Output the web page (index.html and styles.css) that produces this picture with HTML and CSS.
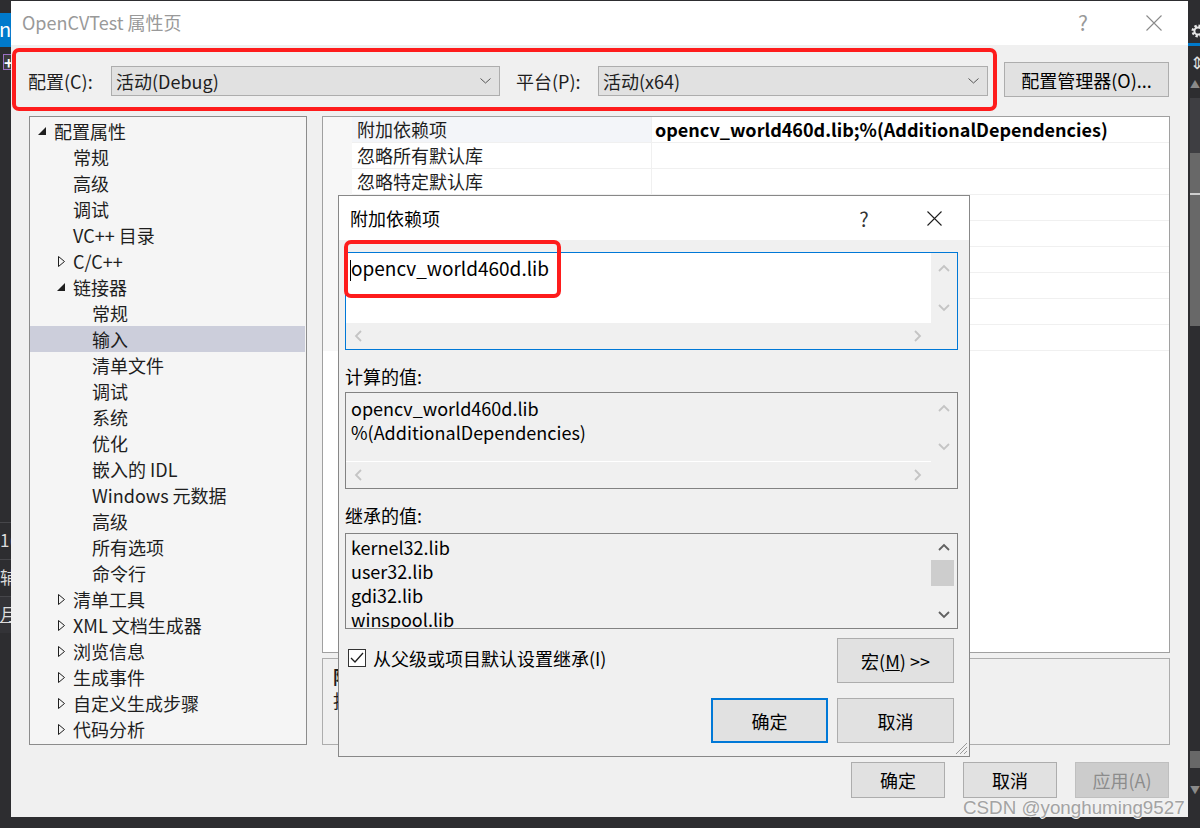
FILE: index.html
```html
<!DOCTYPE html>
<html lang="zh-CN">
<head>
  <meta charset="UTF-8">
  <meta name="viewport" content="width=device-width, initial-scale=1.0">
  <title>OpenCVTest 属性页</title>
  <link rel="stylesheet" href="styles.css">
</head>
<body>
  <div class="desk">
    <!-- strip of the IDE behind, left side -->
    <div class="ide-left">
      <div class="ide-tab">n</div>
      <div class="ide-icon">+</div>
      <div class="ide-space"></div>
      <div class="ide-line">1(</div>
      <div class="ide-line">辅</div>
      <div class="ide-line ide-under">月</div>
    </div>

    <div class="prop-window">
      <div class="titlebar">
        <span class="title">OpenCVTest 属性页</span>
        <span class="tb-help">?</span>
        <span class="tb-close">
          <svg width="16" height="16" viewBox="0 0 16 16"><path d="M0.5 0.5L15.5 15.5M15.5 0.5L0.5 15.5" stroke="#8a8a8a" stroke-width="1.1"/></svg>
        </span>
      </div>

      <div class="win-body">
        <div class="config-row">
          <span class="cfg-label first">配置(C):</span>
          <div class="combo combo-config">
            <span>活动(Debug)</span>
            <svg width="11" height="6" viewBox="0 0 11 6"><polyline points="0.5,0.5 5.5,5 10.5,0.5" fill="none" stroke="#555" stroke-width="1"/></svg>
          </div>
          <span class="cfg-label second">平台(P):</span>
          <div class="combo combo-platform">
            <span>活动(x64)</span>
            <svg width="11" height="6" viewBox="0 0 11 6"><polyline points="0.5,0.5 5.5,5 10.5,0.5" fill="none" stroke="#555" stroke-width="1"/></svg>
          </div>
          <button class="btn btn-manager">配置管理器(O)...</button>
        </div>

        <div class="content">
          <div class="tree">
            <div class="tree-item lv0"><span class="twisty"><svg width="9" height="8" viewBox="0 0 9 8"><polygon points="9,0 9,8 1,8" fill="#1e1e1e"/></svg></span>配置属性</div>
            <div class="tree-item lv1"><span class="twisty"></span>常规</div>
            <div class="tree-item lv1"><span class="twisty"></span>高级</div>
            <div class="tree-item lv1"><span class="twisty"></span>调试</div>
            <div class="tree-item lv1"><span class="twisty"></span>VC++ 目录</div>
            <div class="tree-item lv1"><span class="twisty closed"><svg width="8" height="11" viewBox="0 0 8 11"><polygon points="0.5,0.5 6.5,5.5 0.5,10.5" fill="none" stroke="#1e1e1e" stroke-width="1"/></svg></span>C/C++</div>
            <div class="tree-item lv1"><span class="twisty"><svg width="9" height="8" viewBox="0 0 9 8"><polygon points="9,0 9,8 1,8" fill="#1e1e1e"/></svg></span>链接器</div>
            <div class="tree-item lv2">常规</div>
            <div class="tree-item lv2 selected">输入</div>
            <div class="tree-item lv2">清单文件</div>
            <div class="tree-item lv2">调试</div>
            <div class="tree-item lv2">系统</div>
            <div class="tree-item lv2">优化</div>
            <div class="tree-item lv2">嵌入的 IDL</div>
            <div class="tree-item lv2">Windows 元数据</div>
            <div class="tree-item lv2">高级</div>
            <div class="tree-item lv2">所有选项</div>
            <div class="tree-item lv2">命令行</div>
            <div class="tree-item lv1"><span class="twisty closed"><svg width="8" height="11" viewBox="0 0 8 11"><polygon points="0.5,0.5 6.5,5.5 0.5,10.5" fill="none" stroke="#1e1e1e" stroke-width="1"/></svg></span>清单工具</div>
            <div class="tree-item lv1"><span class="twisty closed"><svg width="8" height="11" viewBox="0 0 8 11"><polygon points="0.5,0.5 6.5,5.5 0.5,10.5" fill="none" stroke="#1e1e1e" stroke-width="1"/></svg></span>XML 文档生成器</div>
            <div class="tree-item lv1"><span class="twisty closed"><svg width="8" height="11" viewBox="0 0 8 11"><polygon points="0.5,0.5 6.5,5.5 0.5,10.5" fill="none" stroke="#1e1e1e" stroke-width="1"/></svg></span>浏览信息</div>
            <div class="tree-item lv1"><span class="twisty closed"><svg width="8" height="11" viewBox="0 0 8 11"><polygon points="0.5,0.5 6.5,5.5 0.5,10.5" fill="none" stroke="#1e1e1e" stroke-width="1"/></svg></span>生成事件</div>
            <div class="tree-item lv1"><span class="twisty closed"><svg width="8" height="11" viewBox="0 0 8 11"><polygon points="0.5,0.5 6.5,5.5 0.5,10.5" fill="none" stroke="#1e1e1e" stroke-width="1"/></svg></span>自定义生成步骤</div>
            <div class="tree-item lv1"><span class="twisty closed"><svg width="8" height="11" viewBox="0 0 8 11"><polygon points="0.5,0.5 6.5,5.5 0.5,10.5" fill="none" stroke="#1e1e1e" stroke-width="1"/></svg></span>代码分析</div>
          </div>

          <div class="props">
            <div class="grid">
              <div class="prow current"><span class="gutter"></span><span class="pname">附加依赖项</span><span class="pvalue">opencv_world460d.lib;%(AdditionalDependencies)</span></div>
              <div class="prow"><span class="gutter"></span><span class="pname">忽略所有默认库</span><span class="pvalue"></span></div>
              <div class="prow"><span class="gutter"></span><span class="pname">忽略特定默认库</span><span class="pvalue"></span></div>
              <div class="prow"><span class="gutter"></span><span class="pname">模块定义文件</span><span class="pvalue"></span></div>
              <div class="prow"><span class="gutter"></span><span class="pname">将模块添加到程序集</span><span class="pvalue"></span></div>
              <div class="prow"><span class="gutter"></span><span class="pname">嵌入托管资源文件</span><span class="pvalue"></span></div>
              <div class="prow"><span class="gutter"></span><span class="pname">强制符号引用</span><span class="pvalue"></span></div>
              <div class="prow"><span class="gutter"></span><span class="pname">延迟加载的 DLL</span><span class="pvalue"></span></div>
              <div class="prow"><span class="gutter"></span><span class="pname">程序集链接资源</span><span class="pvalue"></span></div>
            </div>
            <div class="desc">
              <div class="desc-title">附加依赖项</div>
              <div>指定要添加到链接命令行的附加项。[例如 kernel32.lib]</div>
            </div>
          </div>
        </div>

        <div class="footer">
          <button class="btn btn-footer">确定</button>
          <button class="btn btn-footer">取消</button>
          <button class="btn btn-footer disabled">应用(A)</button>
        </div>

        <div class="mark mark-config"></div>
      </div>
    </div>

    <!-- strip of the IDE behind, right side -->
    <div class="ide-right">
      <div class="ide-gear">
        <svg width="16" height="16" viewBox="0 0 16 16"><circle cx="8" cy="8" r="5" fill="none" stroke="#e8e8e8" stroke-width="3" stroke-dasharray="2.2 1.7"/><circle cx="8" cy="8" r="3.6" fill="none" stroke="#e8e8e8" stroke-width="2"/></svg>
      </div>
      <div class="ide-blue"></div>
      <div class="ide-arrows">⇕</div>
      <div class="ide-tri">▲</div>
      <div class="ide-track"></div>
      <div class="ide-thumb"></div>
      <div class="ide-thumb lower"></div>
      <div class="ide-gap"></div>
      <div class="ide-block"></div>
      <div class="ide-tri down">▼</div>
    </div>
  </div>

  <div class="dialog">
    <div class="dlg-titlebar">
      <span class="dlg-title">附加依赖项</span>
      <span class="dlg-help">?</span>
      <span class="dlg-close">
        <svg width="15" height="15" viewBox="0 0 15 15"><path d="M0.5 0.5L14.5 14.5M14.5 0.5L0.5 14.5" stroke="#1e1e1e" stroke-width="1.1"/></svg>
      </span>
    </div>

    <div class="dlg-body">
      <div class="tbox tbox-edit">
        <div class="tb-text edit"><span class="caret"></span>opencv_world460d.lib</div>
        <div class="vscroll dis">
          <span class="arr"><svg width="12" height="8" viewBox="0 0 12 8"><polyline points="1,7 6,2 11,7" fill="none" stroke="currentColor" stroke-width="1.8"/></svg></span>
          <span class="arr"><svg width="12" height="8" viewBox="0 0 12 8"><polyline points="1,1 6,6 11,1" fill="none" stroke="currentColor" stroke-width="1.8"/></svg></span>
        </div>
        <div class="hscroll dis">
          <span class="arr-h"><svg width="8" height="12" viewBox="0 0 8 12"><polyline points="7,1 2,6 7,11" fill="none" stroke="currentColor" stroke-width="1.8"/></svg></span>
          <span class="arr-h"><svg width="8" height="12" viewBox="0 0 8 12"><polyline points="1,1 6,6 1,11" fill="none" stroke="currentColor" stroke-width="1.8"/></svg></span>
        </div>
        <div class="corner"></div>
      </div>

      <div class="dlg-label">计算的值:</div>
      <div class="tbox tbox-calc">
        <div class="tb-text calc">opencv_world460d.lib<br>%(AdditionalDependencies)</div>
        <div class="vscroll dis">
          <span class="arr"><svg width="12" height="8" viewBox="0 0 12 8"><polyline points="1,7 6,2 11,7" fill="none" stroke="currentColor" stroke-width="1.8"/></svg></span>
          <span class="arr"><svg width="12" height="8" viewBox="0 0 12 8"><polyline points="1,1 6,6 11,1" fill="none" stroke="currentColor" stroke-width="1.8"/></svg></span>
        </div>
        <div class="hscroll dis">
          <span class="arr-h"><svg width="8" height="12" viewBox="0 0 8 12"><polyline points="7,1 2,6 7,11" fill="none" stroke="currentColor" stroke-width="1.8"/></svg></span>
          <span class="arr-h"><svg width="8" height="12" viewBox="0 0 8 12"><polyline points="1,1 6,6 1,11" fill="none" stroke="currentColor" stroke-width="1.8"/></svg></span>
        </div>
        <div class="corner"></div>
      </div>

      <div class="dlg-label inherit">继承的值:</div>
      <div class="tbox tbox-inherit">
        <div class="tb-text inherit">kernel32.lib<br>user32.lib<br>gdi32.lib<br>winspool.lib<br>comdlg32.lib</div>
        <div class="vscroll en">
          <span class="arr small"><svg width="12" height="8" viewBox="0 0 12 8"><polyline points="1,7 6,2 11,7" fill="none" stroke="currentColor" stroke-width="1.8"/></svg></span>
          <span class="thumb"></span>
          <span class="arr small bottom"><svg width="12" height="8" viewBox="0 0 12 8"><polyline points="1,1 6,6 11,1" fill="none" stroke="currentColor" stroke-width="1.8"/></svg></span>
        </div>
      </div>

      <div class="dlg-actions">
        <label class="inherit-check">
          <span class="checkbox"><svg width="14" height="12" viewBox="0 0 14 12"><polyline points="1,6 5,10 13,1" fill="none" stroke="#1e1e1e" stroke-width="1.3"/></svg></span>
          从父级或项目默认设置继承(I)
        </label>
        <button class="btn btn-dlg">宏(<u>M</u>) &gt;&gt;</button>
        <button class="btn btn-dlg btn-ok">确定</button>
        <button class="btn btn-dlg">取消</button>
      </div>
    </div>

    <div class="mark mark-edit"></div>
    <svg class="grip" width="13" height="13" viewBox="0 0 13 13"><path d="M12 1L1 12M12 5L5 12M12 9L9 12" stroke="#9a9a9a" stroke-width="1"/></svg>
  </div>

  <div class="watermark">CSDN @yonghuming9527</div>
</body>
</html>
```

FILE: styles.css
```css
* {
  box-sizing: border-box;
}
body {
  margin: 0;
  width: 1200px;
  height: 828px;
  overflow: hidden;
  position: relative;
  background: #2d2d30;
  font-family: "Noto Sans CJK SC", "Noto Sans", sans-serif;
  font-size: 18px;
  color: #1e1e1e;
}
.desk {
  display: flex;
  height: 817px;
}

/* IDE behind the dialog */
.ide-left {
  width: 11px;
  overflow: hidden;
  display: flex;
  flex-direction: column;
  color: #dcdcdc;
}
.ide-tab {
  margin-top: 13px;
  height: 34px;
  background: #007acc;
  color: #fff;
  font-size: 20px;
  line-height: 32px;
  text-indent: -1px;
}
.ide-icon {
  margin: 7px 0 0 3px;
  width: 14px;
  height: 16px;
  border: 1px solid #9b6fc4;
  background: #3c3c3c;
  color: #fff;
  font-size: 16px;
  line-height: 14px;
  font-weight: bold;
}
.ide-space {
  height: 452px;
}
.ide-line {
  height: 37px;
  border-top: 1px solid #46464a;
  font-size: 17px;
  line-height: 34px;
  white-space: nowrap;
}
.ide-under {
  text-decoration: underline;
  background: #333337;
}
.ide-right {
  width: 12px;
  overflow: hidden;
  display: flex;
  flex-direction: column;
  padding-left: 2px;
  color: #e0e0e0;
}
.ide-gear {
  margin-top: 18px;
  height: 18px;
}
.ide-blue {
  margin: 7px 0 0 -2px;
  height: 3px;
  background: #007acc;
}
.ide-arrows {
  margin-top: 6px;
  font-size: 17px;
  line-height: 20px;
}
.ide-tri {
  margin-top: 6px;
  font-size: 10px;
  line-height: 12px;
  color: #8a8a8a;
}
.ide-track {
  margin-top: 8px;
  height: 55px;
  background: #3e3e42;
}
.ide-thumb {
  height: 42px;
  background: #686868;
  border-bottom: 2px solid #cfcfcf;
}
.ide-thumb.lower {
  height: 131px;
  border-bottom: 0;
}
.ide-gap {
  height: 425px;
}
.ide-block {
  height: 17px;
  background: #686868;
}
.ide-tri.down {
  margin-top: 16px;
}

/* property pages window */
.prop-window {
  width: 1177px;
  margin-top: 1px;
  display: flex;
  flex-direction: column;
}
.titlebar {
  height: 44px;
  background: #fff;
  display: flex;
  align-items: center;
  padding: 0 19px 3px 11px;
}
.title {
  flex: 1;
  color: #999;
}
.tb-help {
  width: 30px;
  margin-right: 41px;
  text-align: center;
  font-size: 21px;
  color: #999;
}
.tb-close {
  width: 30px;
  display: flex;
  justify-content: center;
  padding-top: 3px;
}
.win-body {
  flex: 1;
  position: relative;
  background: #f0f0f0;
  padding: 0 18px;
}
.config-row {
  display: flex;
  align-items: center;
  height: 35px;
  margin-top: 17px;
}
.cfg-label {
  width: 82px;
  padding-top: 3px;
}
.cfg-label.first {
  margin-left: -1px;
  width: 83px;
}
.cfg-label.second {
  margin-left: 16px;
}
.combo {
  height: 30px;
  margin-top: 3px;
  display: flex;
  align-items: center;
  justify-content: space-between;
  padding: 0 8px 0 4px;
  background: #e1e1e1;
  border: 1px solid #adadad;
}
.combo-config {
  width: 389px;
}
.combo-platform {
  width: 390px;
}
.btn {
  font: inherit;
  color: #000;
  background: #e1e1e1;
  border: 1px solid #adadad;
  padding: 0;
}
.btn-manager {
  margin-left: 16px;
  width: 165px;
  height: 35px;
}
.content {
  display: flex;
  height: 629px;
  margin-top: 19px;
}
.tree {
  width: 278px;
  background: #f5f5f5;
  border: 1px solid #8c8c8c;
  padding-top: 1px;
}
.tree-item {
  display: flex;
  align-items: center;
  height: 26px;
  line-height: 26px;
  white-space: nowrap;
}
.tree-item.lv0 {
  padding-left: 5px;
}
.tree-item.lv1 {
  padding-left: 24px;
}
.tree-item.lv2 {
  padding-left: 62px;
}
.tree-item.selected {
  background: #cccedb;
  margin-right: 1px;
}
.twisty {
  width: 19px;
  display: flex;
  align-items: center;
  padding-left: 2px;
}
.twisty.closed {
  padding-left: 4px;
}
.props {
  flex: 1;
  margin-left: 15px;
  display: flex;
  flex-direction: column;
}
.grid {
  height: 537px;
  background: #fff;
  border: 1px solid #a0a0a0;
}
.prow {
  display: grid;
  grid-template-columns: 29px 300px 1fr;
  height: 26px;
  line-height: 25px;
}
.gutter {
  background: #f7f7f7;
}
.pname {
  padding-left: 5px;
  border-bottom: 1px solid #f0f0f0;
  border-right: 1px solid #f0f0f0;
}
.prow.current .pname {
  background: #f3f5f9;
}
.pvalue {
  padding-left: 3px;
  border-bottom: 1px solid #f0f0f0;
  font-weight: bold;
  color: #000;
  white-space: nowrap;
}
.desc {
  flex: 1;
  margin-top: 5px;
  background: #f0f0f0;
  border: 1px solid #adadad;
  padding: 5px 10px;
  line-height: 24px;
  white-space: nowrap;
  overflow: hidden;
}
.desc-title {
  font-weight: bold;
}
.footer {
  display: flex;
  justify-content: flex-end;
  gap: 18px;
  margin-top: 17px;
  padding-right: 1px;
}
.btn-footer {
  width: 94px;
  height: 36px;
}
.btn.disabled {
  background: #cccccc;
  border-color: #bfbfbf;
  color: #8c8c8c;
}

/* red annotation frames */
.mark {
  position: absolute;
  border: 4px solid #fe1c1c;
  border-radius: 7px;
  pointer-events: none;
}
.mark-config {
  left: 1px;
  top: 3px;
  width: 985px;
  height: 63px;
}
.mark-edit {
  left: 5px;
  top: 44px;
  width: 217px;
  height: 58px;
}

/* additional dependencies dialog */
.dialog {
  position: absolute;
  left: 338px;
  top: 195px;
  width: 632px;
  height: 562px;
  background: #f0f0f0;
  border: 1px solid #888;
  display: flex;
  flex-direction: column;
}
.dlg-titlebar {
  height: 44px;
  background: #fff;
  display: flex;
  align-items: center;
  padding: 0 27px 0 11px;
}
.dlg-title {
  flex: 1;
  color: #000;
}
.dlg-help {
  width: 20px;
  margin-right: 53px;
  text-align: center;
  font-size: 20px;
  color: #333;
}
.dlg-close {
  display: flex;
}
.dlg-body {
  padding: 12px 11px 0 6px;
  display: flex;
  flex-direction: column;
}
.tbox {
  display: grid;
  grid-template-columns: 1fr 26px;
  border: 1px solid #828282;
}
.tbox-edit {
  height: 98px;
  grid-template-rows: 1fr 26px;
  border-color: #0078d7;
}
.tbox-calc {
  height: 97px;
  margin-top: 4px;
  grid-template-rows: 1fr 26px;
}
.tbox-inherit {
  height: 96px;
  margin-top: 6px;
}
.tb-text {
  line-height: 24px;
  white-space: nowrap;
  overflow: hidden;
  color: #000;
}
.tb-text.edit {
  background: #fff;
  padding: 3px 0 0 4px;
  font-size: 19px;
}
.caret {
  display: inline-block;
  width: 1px;
  height: 21px;
  background: #000;
  vertical-align: -5px;
}
.tb-text.calc {
  padding: 3px 0 0 5px;
  border-bottom: 1px solid #fff;
}
.tb-text.inherit {
  padding: 1px 0 0 5px;
}
.vscroll {
  display: flex;
  flex-direction: column;
  justify-content: space-between;
}
.arr {
  height: 30px;
  display: flex;
  align-items: center;
  justify-content: center;
}
.arr.small {
  height: 26px;
}
.arr.bottom {
  margin-top: auto;
}
.thumb {
  width: 23px;
  height: 26px;
  background: #cdcdcd;
}
.hscroll {
  display: flex;
  justify-content: space-between;
  align-items: center;
}
.arr-h {
  width: 24px;
  display: flex;
  justify-content: center;
}
.arr-h:last-child {
  width: 26px;
}
.dis {
  color: #c4c4c4;
}
.en {
  color: #606060;
}
.dlg-label {
  margin-top: 14px;
  line-height: 24px;
  color: #000;
}
.dlg-actions {
  display: grid;
  grid-template-columns: 1fr 117px 117px;
  grid-template-rows: 45px 45px;
  column-gap: 9px;
  row-gap: 15px;
  margin-top: 9px;
  padding-right: 4px;
}
.inherit-check {
  grid-column: 1 / 3;
  align-self: start;
  margin-top: 7px;
  padding-left: 3px;
  display: flex;
  align-items: center;
  gap: 7px;
  color: #000;
}
.checkbox {
  width: 18px;
  height: 18px;
  border: 1px solid #333;
  background: #fff;
  display: flex;
  align-items: center;
  justify-content: center;
}
.btn-dlg {
  height: 45px;
}
.btn-ok {
  grid-column: 2;
  border: 2px solid #0078d7;
}
.grip {
  position: absolute;
  right: 1px;
  bottom: 1px;
}

.watermark {
  position: absolute;
  left: 963px;
  top: 797px;
  font-family: "Liberation Sans", sans-serif;
  font-size: 18.8px;
  color: #a3a3a3;
  text-shadow: 1px 0 0 #f4f4f4, -1px 0 0 #f4f4f4, 0 1px 0 #f4f4f4, 0 -1px 0 #f4f4f4;
  white-space: nowrap;
}
```
